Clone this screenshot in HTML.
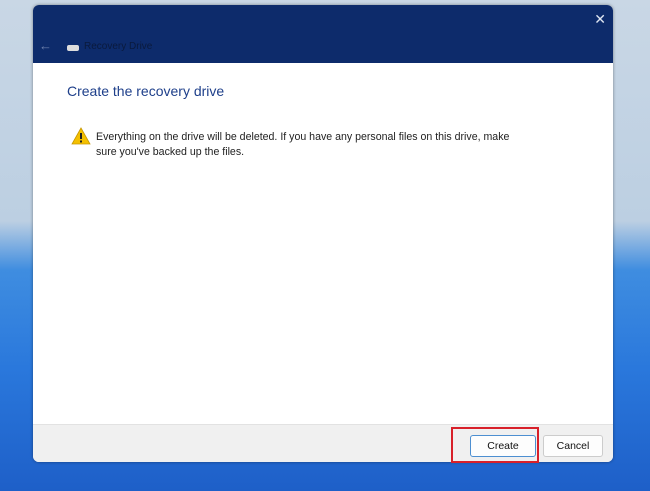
<!DOCTYPE html>
<html><head><style>
body{margin:0;width:650px;height:491px;overflow:hidden;position:relative;font-family:"Liberation Sans",sans-serif;
background:linear-gradient(180deg,#c9d7e5 0%,#bccfe2 45%,#3f8de0 55%,#2a78dc 75%,#1e5fc8 100%);}
.win{position:absolute;left:33px;top:5px;width:580px;height:457px;background:#fff;border-radius:6px;overflow:hidden;box-shadow:0 0 3px rgba(0,0,0,.4);}
.hd{height:58px;background:#0d2b6b;position:relative;}
.x{position:absolute;right:7px;top:6px;color:#dfe6f2;font-size:14px;}
.back{position:absolute;left:6px;top:33px;color:#6d81ad;font-size:13px;}
.ttl{position:absolute;left:51px;top:36px;color:#0a1a3d;font-size:10px;}
.drv{position:absolute;left:34px;top:40px;width:12px;height:6px;background:#ddd;border-radius:2px;}
h1{position:absolute;left:34px;top:78px;margin:0;font-weight:normal;font-size:14px;color:#1e3f8a;}
.warn{position:absolute;left:38px;top:122px;}
.msg{position:absolute;left:63px;top:125px;font-size:10.6px;color:#222;line-height:15px;width:432px;}
.ft{position:absolute;left:0;bottom:0;width:100%;height:37px;background:#f0f0f0;border-top:1px solid #e2e2e2;}
.b{position:absolute;top:10px;height:20px;width:64px;border:1px solid #ccc;border-radius:3px;background:#fdfdfd;font-size:10.5px;text-align:center;line-height:20px;color:#111;}
.red{position:absolute;left:451px;top:427px;width:88px;height:36px;border:2px solid #d8202a;box-sizing:border-box;}
</style></head><body>
<div class="win">
<div class="hd"><span class="x">✕</span><span class="back">←</span><div class="drv"></div><span class="ttl">Recovery Drive</span></div>
<h1>Create the recovery drive</h1>
<svg class="warn" width="20" height="18" viewBox="0 0 20 18"><path d="M10 1L19 17H1Z" fill="#f4c000" stroke="#c79800" stroke-width="0.8"/><rect x="9" y="6" width="2" height="6" fill="#222"/><rect x="9" y="13.5" width="2" height="2" fill="#222"/></svg>
<div class="msg">Everything on the drive will be deleted. If you have any personal files on this drive, make sure you've backed up the files.</div>
<div class="ft"><div class="b" style="left:437px;border-color:#4d8fd1">Create</div><div class="b" style="left:510px;width:58px">Cancel</div></div>
</div>
<div class="red"></div>
</body></html>
